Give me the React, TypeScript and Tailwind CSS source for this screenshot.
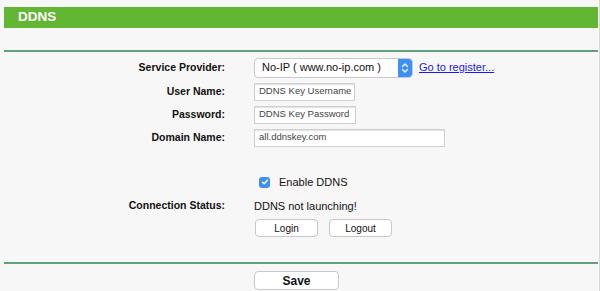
import React from "react";

export default function App() {
  const label = "w-[221px] text-right font-bold text-[10.5px] text-[#111]";
  return (
    <div className="w-[600px] h-[291px] bg-[#f7f7f7] overflow-hidden" style={{ fontFamily: '"Liberation Sans", Arial, sans-serif' }}>
      <div className="pl-[4px] pr-[1px] pt-[7px] border-r border-[#d8d8d8] h-full">
        <div className="h-[21px] bg-[#63b534] flex items-center pl-[14px]">
          <span className="text-white font-bold text-[13.5px]">DDNS</span>
        </div>
        <div className="h-[22px]" />
        <div className="h-[2px] bg-[#5fa17c]" />
        <div className="flex flex-col pt-[5px]">
          <div className="flex items-center h-[21px]">
            <div className={label}>Service Provider:</div>
            <div className="ml-[29px] flex items-center w-[159px] h-[20px] bg-white border border-[#c9c9c9] rounded-[4px] overflow-hidden">
              <span className="flex-1 pl-[7px] text-[11px] text-[#111]">No-IP ( www.no-ip.com )</span>
              <span className="w-[14px] h-full bg-[#3d8ef5] rounded-r-[3px] flex items-center justify-center">
                <svg width="8" height="12" viewBox="0 0 8 12" fill="none" stroke="white" strokeWidth="1.3" strokeLinecap="round" strokeLinejoin="round">
                  <path d="M1.5 4.5 L4 2 L6.5 4.5" />
                  <path d="M1.5 7.5 L4 10 L6.5 7.5" />
                </svg>
              </span>
            </div>
            <a className="ml-[6px] text-[11px] text-[#1a1ae6] underline">Go to register...</a>
          </div>
          <div className="flex items-center h-[23px] mt-[2px]">
            <div className={label}>User Name:</div>
            <div className="ml-[29px] w-[101px] h-[18px] bg-white border border-[#cfcfcf] shadow-[inset_0_1px_1px_rgba(0,0,0,0.12)] flex items-center pl-[4px] text-[9.5px] text-[#444]">DDNS Key Username</div>
          </div>
          <div className="flex items-center h-[23px]">
            <div className={label}>Password:</div>
            <div className="ml-[29px] w-[102px] h-[18px] bg-white border border-[#cfcfcf] shadow-[inset_0_1px_1px_rgba(0,0,0,0.12)] flex items-center pl-[4px] text-[9.5px] text-[#444]">DDNS Key Password</div>
          </div>
          <div className="flex items-center h-[23px]">
            <div className={label}>Domain Name:</div>
            <div className="ml-[29px] w-[191px] h-[18px] bg-white border border-[#cfcfcf] shadow-[inset_0_1px_1px_rgba(0,0,0,0.12)] flex items-center pl-[4px] text-[9.5px] text-[#444]">all.ddnskey.com</div>
          </div>
          <div className="flex items-center h-[24px] mt-[21px]">
            <div className="w-[221px]" />
            <span className="ml-[34px] w-[11px] h-[11px] rounded-[3px] bg-[#3d8ef5] flex items-center justify-center">
              <svg width="8" height="8" viewBox="0 0 8 8" fill="none" stroke="white" strokeWidth="1.4" strokeLinecap="round" strokeLinejoin="round">
                <path d="M1.5 4.2 L3.2 5.8 L6.5 2" />
              </svg>
            </span>
            <span className="ml-[9px] text-[11px] text-[#111]">Enable DDNS</span>
          </div>
          <div className="flex items-center h-[24px]">
            <div className={label}>Connection Status:</div>
            <span className="ml-[29px] text-[11px] text-[#111]">DDNS not launching!</span>
          </div>
          <div className="flex items-center h-[20px]">
            <div className="w-[221px]" />
            <button className="ml-[30px] w-[63px] h-[18px] bg-white border border-[#c8c8c8] rounded-[4px] text-[10px] text-[#111]">Login</button>
            <button className="ml-[11px] w-[63px] h-[18px] bg-white border border-[#c8c8c8] rounded-[4px] text-[10px] text-[#111]">Logout</button>
          </div>
        </div>
        <div className="h-[2px] bg-[#5fa17c] mt-[24px]" />
        <div className="flex pt-[7px]">
          <div className="w-[250px]" />
          <button className="w-[85px] h-[19px] bg-white border border-[#c8c8c8] rounded-[4px] text-[12px] font-bold text-[#111]">Save</button>
        </div>
      </div>
    </div>
  );
}
